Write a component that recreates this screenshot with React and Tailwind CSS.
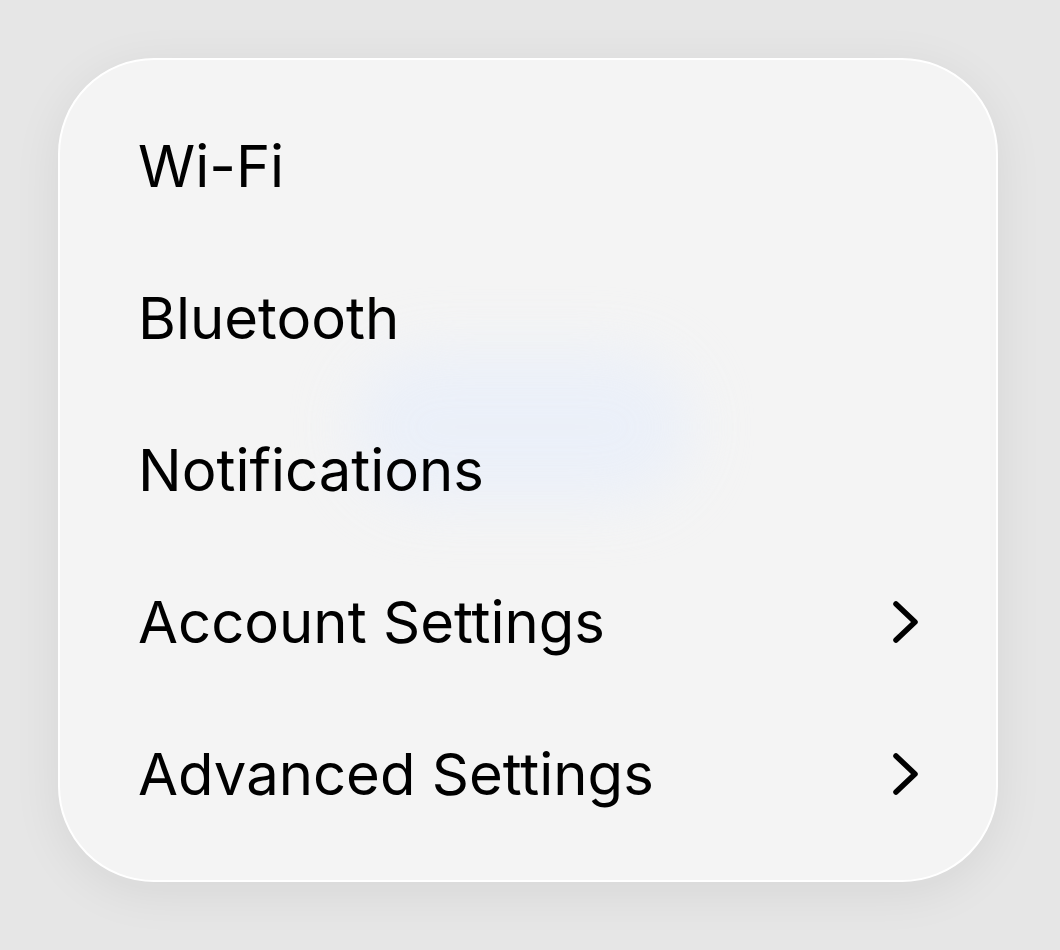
const items = [
    { label: 'Wi-Fi', chevron: false },
    { label: 'Bluetooth', chevron: false },
    { label: 'Notifications', chevron: false },
    { label: 'Account Settings', chevron: true },
    { label: 'Advanced Settings', chevron: true },
];

function Chevron() {
    return (
        <svg width="28" height="44" viewBox="0 0 28 44" fill="none" className="shrink-0">
            <path
                d="M4 4 L23 22 L4 40"
                stroke="#000"
                strokeWidth="5.5"
                strokeLinecap="round"
                strokeLinejoin="round"
            />
        </svg>
    );
}

export default function App() {
    return (
        <div
            className="w-[1060px] h-[950px] bg-[#e6e6e6] pt-[58px] pl-[58px]"
            style={{ fontFamily: 'Inter, "Noto Sans", sans-serif' }}
        >
            <div className="relative w-[940px] rounded-[96px] bg-[#f4f4f4] border-2 border-white shadow-[0_10px_50px_rgba(0,0,0,0.07)] py-[30px] overflow-hidden">
                <div className="absolute left-[292px] top-[292px] w-[340px] h-[150px] rounded-full bg-[#e9effa] blur-[30px] opacity-80" />
                <ul className="relative">
                    {items.map((item) => (
                        <li
                            key={item.label}
                            className="h-[152px] flex items-center justify-between pl-[78px] pr-[76px]"
                        >
                            <span className="text-[58px] leading-none text-black">
                                {item.label}
                            </span>
                            {item.chevron && <Chevron />}
                        </li>
                    ))}
                </ul>
            </div>
        </div>
    );
}
